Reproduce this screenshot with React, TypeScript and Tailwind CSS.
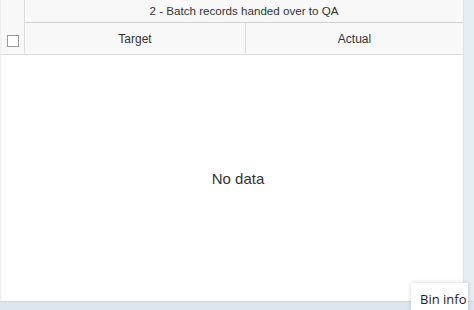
export default function App() {
  return (
    <div
      className="relative w-[474px] h-[310px] overflow-hidden bg-[#e4eff3] flex flex-col"
      style={{ fontFamily: '"Liberation Sans", Arial, sans-serif' }}
    >
      <div className="flex h-[301px]">
        <div className="w-[464px] bg-white border-r border-[#d6e4ea] flex flex-col border-l border-l-[#eeeeee]">
          {/* header */}
          <div className="flex h-[55px] border-b border-[#dcdcdc] bg-[#f8f8f8]">
            <div className="w-[24px] border-r border-[#dcdcdc] flex items-center justify-center pt-[28px]">
              <span className="block w-[12px] h-[12px] border border-[#9a9a9a] bg-white" />
            </div>
            <div className="flex-1 flex flex-col">
              <div className="h-[23px] border-b border-[#d0d0d0] flex items-center justify-center text-[11.6px] text-[#333]">
                2 - Batch records handed over to QA
              </div>
              <div className="flex-1 flex text-[12px] text-[#333]">
                <div className="w-[221px] border-r border-[#dcdcdc] flex items-center justify-center">Target</div>
                <div className="flex-1 flex items-center justify-center">Actual</div>
              </div>
            </div>
          </div>
          {/* body */}
          <div className="flex-1 flex items-center justify-center text-[15px] text-[#333] pt-[2px] pl-[12px]">
            No data
          </div>
        </div>
        <div className="flex-1" />
      </div>
      <div className="flex-1 bg-[#dde6ee] border-t border-[#cfdae4]" />

      <div
        className="absolute left-[411px] top-[283px] w-[57px] h-[30px] bg-white shadow-[0_0_4px_rgba(0,0,0,0.18)] pl-[9px] pt-[7px] text-[13px] text-[#222]"
        style={{ fontFamily: '"Open Sans", "Liberation Sans", sans-serif' }}
      >
        Bin info
      </div>
    </div>
  );
}
